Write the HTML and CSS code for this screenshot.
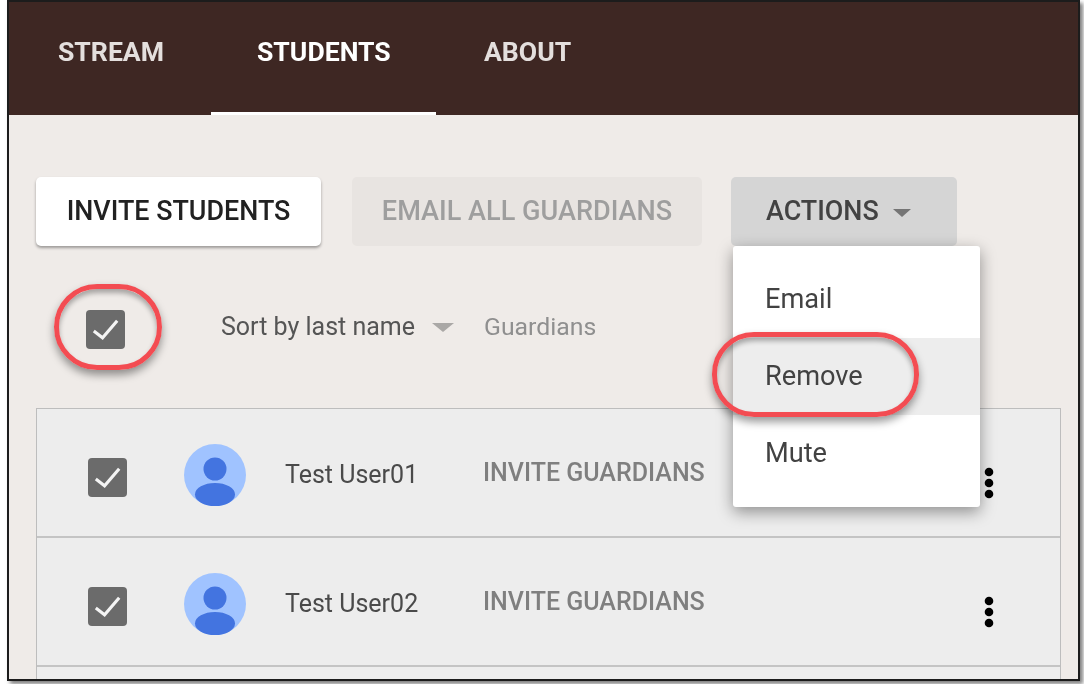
FILE: index.html
```html
<!DOCTYPE html>
<html lang="en">
<head>
<meta charset="utf-8">
<title>Students</title>
<link rel="stylesheet" href="styles.css">
</head>
<body>
<div class="window">
  <header class="tabs">
    <a class="tab">STREAM</a>
    <a class="tab active">STUDENTS</a>
    <a class="tab">ABOUT</a>
  </header>
  <main class="content">
    <div class="toolbar">
      <button class="btn btn-white">INVITE STUDENTS</button>
      <button class="btn btn-disabled">EMAIL ALL GUARDIANS</button>
      <button class="btn btn-actions">ACTIONS<span class="caret caret-small"></span></button>
    </div>
    <div class="sortbar">
      <span class="check check-head"><svg viewBox="0 0 40 40"><path d="M8 21.500L17 28.500 32 11" fill="none" stroke="#f4f4f4" stroke-width="3.200"/></svg></span>
      <span class="sort">Sort by last name</span>
      <span class="caret caret-sort"></span>
      <span class="guardians">Guardians</span>
    </div>
    <div class="list">
      <div class="row">
        <span class="check"><svg viewBox="0 0 40 40"><path d="M8 21.500L17 28.500 32 11" fill="none" stroke="#f4f4f4" stroke-width="3.200"/></svg></span>
        <svg class="avatar" viewBox="0 0 62 62"><circle cx="31" cy="31" r="31" fill="#a0c3ff"/><circle cx="31" cy="25" r="11.500" fill="#4374e0"/><ellipse cx="31" cy="50.500" rx="20" ry="11.500" fill="#4374e0"/></svg>
        <span class="name">Test User01</span>
        <span class="invite">INVITE GUARDIANS</span>
        <svg class="kebab" viewBox="0 0 10 32"><circle cx="5" cy="5" r="4.300"/><circle cx="5" cy="16" r="4.300"/><circle cx="5" cy="27" r="4.300"/></svg>
      </div>
      <div class="row">
        <span class="check"><svg viewBox="0 0 40 40"><path d="M8 21.500L17 28.500 32 11" fill="none" stroke="#f4f4f4" stroke-width="3.200"/></svg></span>
        <svg class="avatar" viewBox="0 0 62 62"><circle cx="31" cy="31" r="31" fill="#a0c3ff"/><circle cx="31" cy="25" r="11.500" fill="#4374e0"/><ellipse cx="31" cy="50.500" rx="20" ry="11.500" fill="#4374e0"/></svg>
        <span class="name">Test User02</span>
        <span class="invite">INVITE GUARDIANS</span>
        <svg class="kebab" viewBox="0 0 10 32"><circle cx="5" cy="5" r="4.300"/><circle cx="5" cy="16" r="4.300"/><circle cx="5" cy="27" r="4.300"/></svg>
      </div>
      <div class="row"></div>
    </div>
  </main>
  <ul class="menu">
    <li>Email</li>
    <li class="hover">Remove</li>
    <li>Mute</li>
  </ul>
  <span class="ring ring-check"></span>
  <span class="ring ring-remove"></span>
</div>
</body>
</html>
```
FILE: styles.css
```css
* { box-sizing: border-box; }
html, body { margin: 0; height: 684px; overflow: hidden; background: #fff; }
body { font-family: Roboto, "Liberation Sans", sans-serif; }

.window {
  position: relative;
  margin-left: 7px;
  width: 1073px;
  height: 681px;
  border: 2px solid #1c1c1c;
  overflow: hidden;
  background: #efebe8;
  box-shadow: 3px 3px 4px rgba(0,0,0,.5);
  filter: blur(.35px);
}
.tabs {
  display: flex;
  height: 113px;
  background: #3e2723;
  padding-left: 4px;
}
.tab {
  width: 225px;
  height: 113px;
  padding: 35px 0 0 45px;
  font-size: 26.600px;
  line-height: 30px;
  font-weight: 700;
  color: #e4dfdd;
}
.tab:first-child { width: 198px; padding-left: 45px; }
.tab.active { padding-left: 46px; color: #fff; border-bottom: 3px solid #fff; }
.tab:last-child { padding-left: 48px; }

.content { padding: 62px 17px 0 27px; }
.toolbar { display: flex; height: 69px; }
.btn {
  border: 0;
  height: 69px;
  border-radius: 5px;
  padding: 0 0 2px;
  font: 500 26.900px/30px Roboto, sans-serif;
}
.btn-white { width: 285px; background: #fff; color: #212121; box-shadow: 0 2px 3px rgba(0,0,0,.35); }
.btn-disabled { width: 350px; margin-left: 31px; background: #e8e4e1; color: #9e9e9e; font-size: 27.100px; }
.btn-actions {
  display: flex;
  align-items: center;
  width: 226px;
  margin-left: 29px;
  padding-left: 35px;
  background: #d5d5d5;
  color: #424242;
}
.caret {
  display: block;
  width: 0;
  height: 0;
  border-style: solid;
}
.caret-small { margin: 4px 0 0 14px; border-width: 8px 9.500px 0; border-color: #757575 transparent transparent; }
.caret-sort { margin: 1px 0 0 17px; border-width: 9px 11px 0; border-color: #aaa8a6 transparent transparent; }

.sortbar { display: flex; align-items: center; height: 162px; padding-left: 50px; }
.check {
  display: flex;
  flex: none;
  width: 39px;
  height: 39px;
  margin-top: 10px;
  border-radius: 4px;
  background: #6b6b6b;
}
.check svg { width: 100%; height: 100%; }
.check-head { margin-top: 4px; }
.sort { margin-left: 96px; font-size: 25px; line-height: 30px; color: #555; }
.guardians { margin-left: 30px; font-size: 24.800px; line-height: 30px; color: #8f8f8f; }

.list {
  border: 1px solid #bdbdbd;
  border-bottom: 0;
  height: 300px;
  background: #ededed;
}
.row {
  display: flex;
  align-items: center;
  height: 129px;
  padding-left: 51px;
  border-bottom: 2px solid #c4c4c4;
}
.avatar { width: 62px; height: 62px; margin: 4px 0 0 57px; flex: none; }
.name { width: 198px; margin: 4px 0 0 39px; font-size: 25px; line-height: 30px; color: #4a4a4a; }
.invite { width: 280px; margin-top: 1px; font-size: 25px; line-height: 30px; font-weight: 500; color: #7f7f7f; }
.kebab { width: 10px; height: 32px; margin: 20px 0 0 221px; flex: none; }

.menu {
  position: absolute;
  left: 724px;
  top: 244px;
  width: 247px;
  height: 261px;
  margin: 0;
  padding: 15px 0 0;
  list-style: none;
  background: #fff;
  border-radius: 3px;
  box-shadow: 0 5px 16px rgba(0,0,0,.4);
}
.menu li {
  height: 77px;
  padding: 23px 0 0 32px;
  font-size: 27.200px;
  line-height: 30px;
  color: #424242;
}

.menu .hover { background: #ededed; }

.ring {
  position: absolute;
  border: 5px solid #f34c52;
  box-shadow: 0 5px 8px rgba(0,0,0,.4), inset 0 4px 5px rgba(0,0,0,.3);
}
.ring-check { left: 45px; top: 282px; width: 108px; height: 86px; border-radius: 43px; }
.ring-remove { left: 703px; top: 330px; width: 207px; height: 85px; border-radius: 42px; }
```
